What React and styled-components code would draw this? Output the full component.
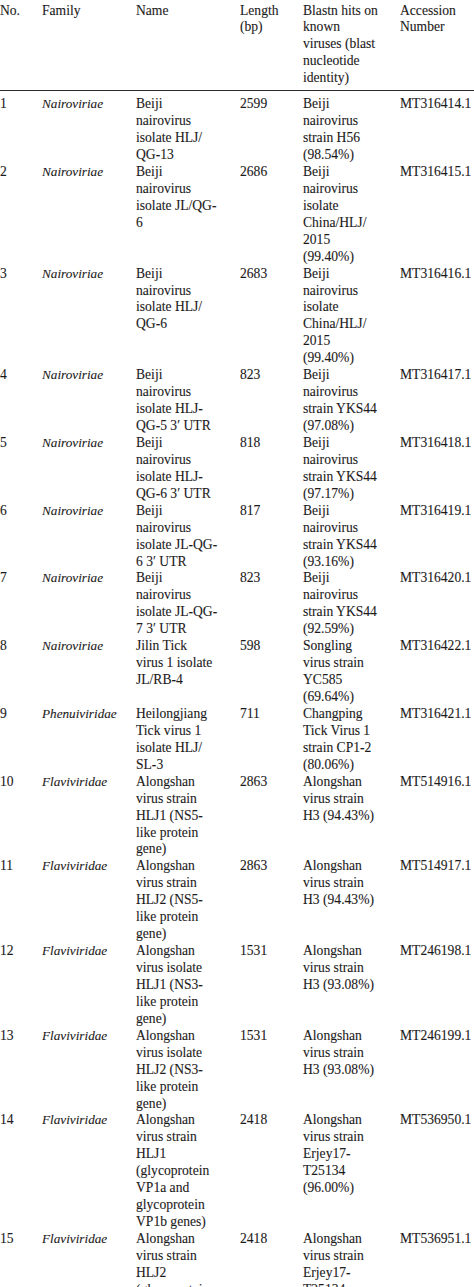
import React from "react";
import styled, { createGlobalStyle } from "styled-components";

const GlobalStyle = createGlobalStyle`
  html, body {
    margin: 0;
    padding: 0;
    background: #ffffff;
  }
  body {
    font-family: "Liberation Serif", "Times New Roman", serif;
    color: #1c1a1a;
    overflow: hidden;
  }
`;

const Table = styled.div`
  width: 474px;
  font-size: 13.6px;
  line-height: 16.94px;
  -webkit-text-stroke: 0.1px #1c1a1a;
`;

const Row = styled.div`
  display: grid;
  grid-template-columns: 42px 94px 104px 63px 97px 1fr;
`;

const HeadRow = styled(Row)`
  padding-top: 2.5px;
  padding-bottom: 3px;
  border-bottom: 1.5px solid #2b2b2b;
  margin-bottom: 5px;
`;

const Cell = styled.div`
  white-space: nowrap;
  font-style: ${(p) => (p.$italic ? "italic" : "normal")};
  font-size: ${(p) => (p.$italic ? "13.2px" : "inherit")};
`;

const Line = styled.div``;

const header = [
  ["No."],
  ["Family"],
  ["Name"],
  ["Length", "(bp)"],
  ["Blastn hits on", "known", "viruses (blast", "nucleotide", "identity)"],
  ["Accession", "Number"],
];

const beiji = (a, b) => ["Beiji", "nairovirus", a, b];

const rows = [
  ["1", "Nairoviriae", ["Beiji", "nairovirus", "isolate HLJ/", "QG-13"], "2599", beiji("strain H56", "(98.54%)"), "MT316414.1"],
  ["2", "Nairoviriae", ["Beiji", "nairovirus", "isolate JL/QG-", "6"], "2686", ["Beiji", "nairovirus", "isolate", "China/HLJ/", "2015", "(99.40%)"], "MT316415.1"],
  ["3", "Nairoviriae", ["Beiji", "nairovirus", "isolate HLJ/", "QG-6"], "2683", ["Beiji", "nairovirus", "isolate", "China/HLJ/", "2015", "(99.40%)"], "MT316416.1"],
  ["4", "Nairoviriae", ["Beiji", "nairovirus", "isolate HLJ-", "QG-5 3\u2032 UTR"], "823", beiji("strain YKS44", "(97.08%)"), "MT316417.1"],
  ["5", "Nairoviriae", ["Beiji", "nairovirus", "isolate HLJ-", "QG-6 3\u2032 UTR"], "818", beiji("strain YKS44", "(97.17%)"), "MT316418.1"],
  ["6", "Nairoviriae", ["Beiji", "nairovirus", "isolate JL-QG-", "6 3\u2032 UTR"], "817", beiji("strain YKS44", "(93.16%)"), "MT316419.1"],
  ["7", "Nairoviriae", ["Beiji", "nairovirus", "isolate JL-QG-", "7 3\u2032 UTR"], "823", beiji("strain YKS44", "(92.59%)"), "MT316420.1"],
  ["8", "Nairoviriae", ["Jilin Tick", "virus 1 isolate", "JL/RB-4"], "598", ["Songling", "virus strain", "YC585", "(69.64%)"], "MT316422.1"],
  ["9", "Phenuiviridae", ["Heilongjiang", "Tick virus 1", "isolate HLJ/", "SL-3"], "711", ["Changping", "Tick Virus 1", "strain CP1-2", "(80.06%)"], "MT316421.1"],
  ["10", "Flaviviridae", ["Alongshan", "virus strain", "HLJ1 (NS5-", "like protein", "gene)"], "2863", ["Alongshan", "virus strain", "H3 (94.43%)"], "MT514916.1"],
  ["11", "Flaviviridae", ["Alongshan", "virus strain", "HLJ2 (NS5-", "like protein", "gene)"], "2863", ["Alongshan", "virus strain", "H3 (94.43%)"], "MT514917.1"],
  ["12", "Flaviviridae", ["Alongshan", "virus isolate", "HLJ1 (NS3-", "like protein", "gene)"], "1531", ["Alongshan", "virus strain", "H3 (93.08%)"], "MT246198.1"],
  ["13", "Flaviviridae", ["Alongshan", "virus isolate", "HLJ2 (NS3-", "like protein", "gene)"], "1531", ["Alongshan", "virus strain", "H3 (93.08%)"], "MT246199.1"],
  ["14", "Flaviviridae", ["Alongshan", "virus strain", "HLJ1", "(glycoprotein", "VP1a and", "glycoprotein", "VP1b genes)"], "2418", ["Alongshan", "virus strain", "Erjey17-", "T25134", "(96.00%)"], "MT536950.1"],
  ["15", "Flaviviridae", ["Alongshan", "virus strain", "HLJ2", "(glycoprotein", "VP1a and", "glycoprotein", "VP1b genes)"], "2418", ["Alongshan", "virus strain", "Erjey17-", "T25134", "(96.00%)"], "MT536951.1"],
];

const Lines = ({ value }) =>
  (Array.isArray(value) ? value : [value]).map((t, i) => <Line key={i}>{t}</Line>);

const App = () => {
  return (
    <>
      <GlobalStyle />
      <Table>
        <HeadRow>
          {header.map((h, i) => (
            <Cell key={i}>
              <Lines value={h} />
            </Cell>
          ))}
        </HeadRow>
        {rows.map((r) => (
          <Row key={r[0]}>
            <Cell>{r[0]}</Cell>
            <Cell $italic>{r[1]}</Cell>
            <Cell>
              <Lines value={r[2]} />
            </Cell>
            <Cell>{r[3]}</Cell>
            <Cell>
              <Lines value={r[4]} />
            </Cell>
            <Cell>{r[5]}</Cell>
          </Row>
        ))}
      </Table>
    </>
  );
};

export default App;
